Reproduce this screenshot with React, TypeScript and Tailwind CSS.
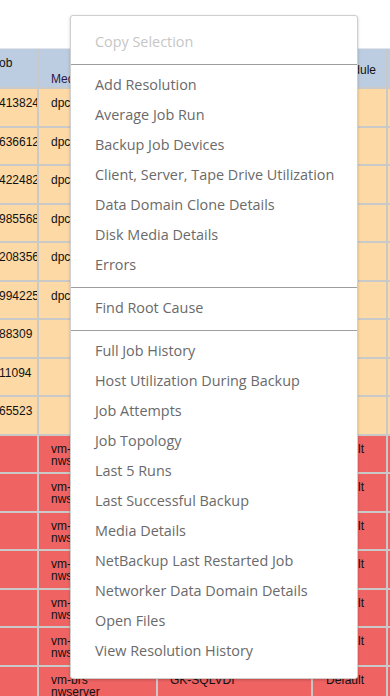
const menuGroups: string[][] = [
  ["Copy Selection"],
  [
    "Add Resolution",
    "Average Job Run",
    "Backup Job Devices",
    "Client, Server, Tape Drive Utilization",
    "Data Domain Clone Details",
    "Disk Media Details",
    "Errors",
  ],
  ["Find Root Cause"],
  [
    "Full Job History",
    "Host Utilization During Backup",
    "Job Attempts",
    "Job Topology",
    "Last 5 Runs",
    "Last Successful Backup",
    "Media Details",
    "NetBackup Last Restarted Job",
    "Networker Data Domain Details",
    "Open Files",
    "View Resolution History",
  ],
];

type Row = {
  job: string;
  server: string[];
  client: string;
  schedule: string;
  failed: boolean;
};

const failedRow: Row = {
  job: "",
  server: ["vm-brs", "nwserver"],
  client: "GK-SQLVDI",
  schedule: "Default",
  failed: true,
};

const rows: Row[] = [
  { job: "413824", server: ["dpc"], client: "", schedule: "", failed: false },
  { job: "636612", server: ["dpc"], client: "", schedule: "", failed: false },
  { job: "422482", server: ["dpc"], client: "", schedule: "", failed: false },
  { job: "985568", server: ["dpc"], client: "", schedule: "", failed: false },
  { job: "208356", server: ["dpc"], client: "", schedule: "", failed: false },
  { job: "994225", server: ["dpc"], client: "", schedule: "", failed: false },
  { job: "88309", server: [], client: "", schedule: "", failed: false },
  { job: "11094", server: [], client: "", schedule: "", failed: false },
  { job: "65523", server: [], client: "", schedule: "", failed: false },
  failedRow,
  failedRow,
  failedRow,
  failedRow,
  failedRow,
  failedRow,
  failedRow,
  failedRow,
];

function ContextMenu() {
  return (
    <div className="absolute left-[70px] top-[15px] w-[288px] rounded-[3px] border border-[#cfcfcf] bg-white pb-[11px] pt-[12px] shadow-[0_1px_3px_rgba(0,0,0,0.22)] font-['Open_Sans',sans-serif] text-[14.4px]">
      {menuGroups.map((group, gi) => (
        <div key={gi}>
          {gi > 0 && <div className="my-[6px] h-px bg-[#9e9e9e]" />}
          {group.map((item) => (
            <div
              key={item}
              className={`flex h-[30px] items-center whitespace-nowrap pb-[3px] pl-6 ${
                gi === 0 ? "text-[#c6c6c6]" : "text-[#6a6a6a]"
              }`}
            >
              {item}
            </div>
          ))}
        </div>
      ))}
    </div>
  );
}

export default function App() {
  return (
    <div className="relative h-[696px] w-[390px] overflow-hidden bg-white font-['Liberation_Sans',sans-serif] text-[12px] leading-[13px] text-[#111]">
      <div className="h-[48px]" />
      <div className="grid grid-cols-[37px_117px_153px_73px_60px] gap-[2px] border-t border-[#e2e6ec] bg-[#c9c9c9]">
        <div className="h-[38px] overflow-hidden bg-[#bccde1] pt-[8px]">
          <span className="-ml-[7px] whitespace-nowrap">Job</span>
        </div>
        <div className="h-[38px] overflow-hidden bg-[#bccde1] pl-3 pt-[24px] text-[#2b1747]">
          <span className="whitespace-nowrap">Media Server</span>
        </div>
        <div className="h-[38px] overflow-hidden bg-[#bccde1] pl-3 pt-[16px]">
          <span className="whitespace-nowrap">Client</span>
        </div>
        <div className="flex h-[38px] justify-end overflow-hidden bg-[#bccde1] pr-[10px] pt-[15px]">
          <span className="whitespace-nowrap">Schedule</span>
        </div>
        <div className="h-[38px] bg-[#bccde1]" />

        {rows.map((row, i) => {
          const cell = row.failed
            ? "h-[36.5px] overflow-hidden bg-[#ef6363] pt-[7px] leading-[12px]"
            : "h-[36.5px] overflow-hidden bg-[#fdd9a5] pt-[8px]";
          return [
            <div key={`${i}a`} className={cell}>
              <span className="-ml-px whitespace-nowrap">{row.job}</span>
            </div>,
            <div key={`${i}b`} className={`${cell} pl-3`}>
              {row.server.map((line) => (
                <div key={line} className="whitespace-nowrap">
                  {line}
                </div>
              ))}
            </div>,
            <div key={`${i}c`} className={`${cell} pl-3`}>
              <span className="whitespace-nowrap">{row.client}</span>
            </div>,
            <div key={`${i}d`} className={`${cell} pl-[13px]`}>
              <span className="whitespace-nowrap">{row.schedule}</span>
            </div>,
            <div key={`${i}e`} className={cell} />,
          ];
        })}
      </div>
      <ContextMenu />
    </div>
  );
}
